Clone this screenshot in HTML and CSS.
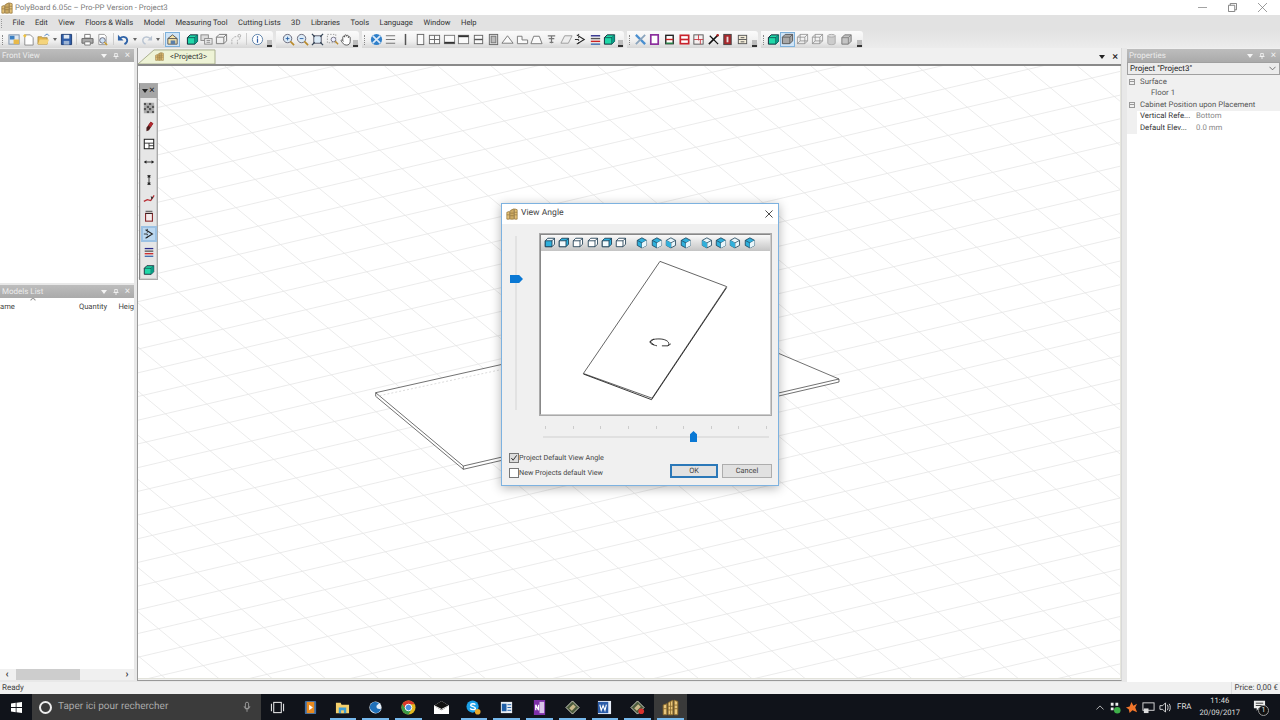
FILE: index.html
```html
<!DOCTYPE html>
<html lang="en">
<head>
<meta charset="utf-8">
<title>PolyBoard</title>
<link rel="stylesheet" href="styles.css">
</head>
<body>
<svg class="defs" width="0" height="0">
  <defs>
    <symbol id="pb" viewBox="0 0 14 14"><path d="M1 5l3-1v9H1zM5 3l4-2v12H5zM10 1l3 1v11h-3z" fill="#e9c67c" stroke="#8a6a2c" stroke-width=".8"/><path d="M5 6h4M5 9h4M1 8h3M10 5h3M10 8h3M7 2v11" stroke="#8a6a2c" stroke-width=".7"/></symbol>
    <symbol id="pin" viewBox="0 0 7 7"><path d="M2 .5h3v3.500H2zM.5 4h6M3.500 4v3" fill="none" stroke="#f4f4f4"/></symbol>
    <symbol id="cube" viewBox="0 0 14 14"><path d="M1.500 5l3-3h8v7l-3 3h-8z" fill="#1fd8a8" stroke="#123" stroke-width="1"/><path d="M1.500 5h8v7M9.500 5l3-3" fill="none" stroke="#123" stroke-width=".7"/><path d="M9.500 5l3-3v7l-3 3z" fill="#0a9c86"/></symbol>
    <symbol id="proj" viewBox="0 0 14 14"><rect x="1" y="2" width="11" height="10" fill="#dfe8f2" stroke="#7a8fa8"/><path d="M2 3h5v4H2z" fill="#3a7fc2"/><path d="M6 7h6v5H6z" fill="#e8b94a"/></symbol>
    <symbol id="new" viewBox="0 0 14 14"><path d="M3 2h6l3 3v8H3z" fill="#fff" stroke="#8a8a8a"/><path d="M1 3l2-2 2 2-2 2z" fill="#eec23f"/></symbol>
    <symbol id="open" viewBox="0 0 14 14"><path d="M1 4h4l1 1h5v7H1z" fill="#e3b54a" stroke="#9a7a2c" stroke-width=".7"/><path d="M3 7h10l-2 5H1z" fill="#f4d47c"/><path d="M8 3l3-2 2 2" fill="none" stroke="#4b82bf"/></symbol>
    <symbol id="save" viewBox="0 0 14 14"><path d="M1.500 1.500h11v11h-11z" fill="#2f5da8" stroke="#1c3a70"/><rect x="4" y="2" width="6" height="4" fill="#dfe8f2"/><rect x="4" y="8.500" width="6" height="4" fill="#9db4d4"/></symbol>
    <symbol id="print" viewBox="0 0 14 14"><path d="M4 1.500h6v4H4z" fill="#fff" stroke="#777"/><path d="M1 6h12v5H1z" fill="#a9a9a9" stroke="#666"/><path d="M4 9.500h6v3.500H4z" fill="#fff" stroke="#777"/></symbol>
    <symbol id="prev" viewBox="0 0 14 14"><path d="M3 1.500h6l2 2v9H3z" fill="#fff" stroke="#999"/><circle cx="7" cy="8" r="3" fill="#cfe2f5" stroke="#667"/><path d="M9 10l3 3" stroke="#c99b2a" stroke-width="1.500"/></symbol>
    <symbol id="undo" viewBox="0 0 14 14"><path d="M3 6c3-3 8-2 8 2 0 2-1 3-3 4" fill="none" stroke="#2f63a8" stroke-width="2"/><path d="M1 2v6h6z" fill="#2f63a8"/></symbol>
    <symbol id="redo" viewBox="0 0 14 14"><path d="M11 6C8 3 3 4 3 8c0 2 1 3 3 4" fill="none" stroke="#b9c4d2" stroke-width="1.500"/><path d="M13 3v5H8z" fill="#b9c4d2"/></symbol>
    <symbol id="boxsel" viewBox="0 0 14 14"><path d="M2 6l5-4 5 4v6H2z" fill="#f7e3a8" stroke="#555"/><path d="M2 6h10" stroke="#555"/><path d="M5 8h5v4H5z" fill="#5b7fa8"/></symbol>
    <symbol id="gcube" viewBox="0 0 14 14"><path d="M1.500 4.500l3-3h8v7l-3 3h-8z" fill="none" stroke="#777"/><path d="M1.500 4.500h8v7M9.500 4.500l3-3" fill="none" stroke="#777"/></symbol>
    <symbol id="stack" viewBox="0 0 14 14"><rect x="1" y="2" width="8" height="6" fill="#ddd" stroke="#888"/><rect x="5" y="6" width="8" height="6" fill="#eee" stroke="#888"/><path d="M7 8h4M7 10h4" stroke="#888"/></symbol>
    <symbol id="faint" viewBox="0 0 14 14"><path d="M2 12V7l3-3h3M8 12V8l4-3" fill="none" stroke="#aaa" stroke-dasharray="2 1"/><circle cx="10" cy="3" r="1.500" fill="none" stroke="#aaa"/></symbol>
    <symbol id="info" viewBox="0 0 14 14"><circle cx="7" cy="7" r="5.500" fill="#fff" stroke="#5b7fa8"/><path d="M7 6v4.500M7 3.500v1.500" stroke="#2f5da8" stroke-width="1.300"/></symbol>
    <symbol id="zin" viewBox="0 0 14 14"><circle cx="6" cy="6" r="4.500" fill="#dcebf7" stroke="#667"/><path d="M4 6h4M6 4v4" stroke="#2f63a8"/><path d="M9 9l4 4" stroke="#b98a2a" stroke-width="1.800"/></symbol>
    <symbol id="zout" viewBox="0 0 14 14"><circle cx="6" cy="6" r="4.500" fill="#dcebf7" stroke="#667"/><path d="M4 6h4" stroke="#2f63a8"/><path d="M9 9l4 4" stroke="#b98a2a" stroke-width="1.800"/></symbol>
    <symbol id="zext" viewBox="0 0 14 14"><rect x="3" y="3" width="8" height="8" fill="#dcebf7" stroke="#556"/><path d="M1 1l3 3M13 1l-3 3M1 13l3-3M13 13l-3-3" stroke="#345" stroke-width="1.300"/></symbol>
    <symbol id="zwin" viewBox="0 0 14 14"><rect x="1.500" y="1.500" width="9" height="9" fill="none" stroke="#999" stroke-dasharray="1.500 1.500"/><circle cx="8" cy="7" r="2.500" fill="#eef" stroke="#778"/><path d="M10 9l3 3" stroke="#b98a2a" stroke-width="1.500"/></symbol>
    <symbol id="hand" viewBox="0 0 14 14"><path d="M3 8V4.500a1 1 0 012 0V3a1 1 0 012 0v.500a1 1 0 012 0V5a1 1 0 012 0v4c0 3-2 4-4 4-3 0-4-2-6-5 1-1 2 0 3 1" fill="#fff" stroke="#444" stroke-width=".9"/></symbol>
    <symbol id="globe" viewBox="0 0 14 14"><circle cx="7" cy="7" r="6" fill="#2f7fc9"/><path d="M3 3l8 8M11 3l-8 8" stroke="#dbeafa" stroke-width="1.800"/></symbol>
    <symbol id="lines" viewBox="0 0 14 14"><path d="M2 3h10M2 7h10M2 11h10" stroke="#777" stroke-width="1.200"/></symbol>
    <symbol id="ibar" viewBox="0 0 14 14"><path d="M7 1v12" stroke="#555" stroke-width="1.600"/></symbol>
    <symbol id="rect" viewBox="0 0 14 14"><rect x="3.500" y="1.500" width="7" height="11" fill="#fafafa" stroke="#666"/></symbol>
    <symbol id="cross" viewBox="0 0 14 14"><rect x="1.500" y="2.500" width="11" height="9" fill="#fafafa" stroke="#666"/><path d="M1.500 7h11M7 2.500v9" stroke="#666"/></symbol>
    <symbol id="lower" viewBox="0 0 14 14"><rect x="1.500" y="2.500" width="11" height="9" fill="#fafafa" stroke="#777"/><path d="M1.500 10.500h11" stroke="#333" stroke-width="2"/></symbol>
    <symbol id="upper" viewBox="0 0 14 14"><rect x="1.500" y="2.500" width="11" height="9" fill="#fafafa" stroke="#777"/><path d="M1.500 3.500h11" stroke="#333" stroke-width="2"/></symbol>
    <symbol id="mid" viewBox="0 0 14 14"><rect x="2.500" y="2.500" width="9" height="9" fill="#fafafa" stroke="#666"/><path d="M2.500 7h9" stroke="#555" stroke-width="1.500"/></symbol>
    <symbol id="panel" viewBox="0 0 14 14"><rect x="2.500" y="1.500" width="9" height="11" fill="#e0e0e0" stroke="#666"/><rect x="4.500" y="3.500" width="5" height="7" fill="#bbb" stroke="#777"/></symbol>
    <symbol id="house" viewBox="0 0 14 14"><path d="M1 11L7 3l6 8z" fill="#fafafa" stroke="#777"/></symbol>
    <symbol id="step" viewBox="0 0 14 14"><path d="M1.500 3.500h5v4h6v4h-11z" fill="#fafafa" stroke="#777"/></symbol>
    <symbol id="trap" viewBox="0 0 14 14"><path d="M1 11.500l3-8h6l3 8z" fill="#fafafa" stroke="#777"/></symbol>
    <symbol id="tee" viewBox="0 0 14 14"><path d="M3 3h8M7 3v8M4 6h6M5 10h4" stroke="#777" stroke-width="1.300"/></symbol>
    <symbol id="para" viewBox="0 0 14 14"><path d="M1 11l4-8h8l-4 8z" fill="#eee" stroke="#999"/></symbol>
    <symbol id="axis" viewBox="0 0 14 14"><path d="M3 2l8 5-8 5" fill="none" stroke="#222" stroke-width="1.200"/><path d="M5 1v12" stroke="#222" stroke-dasharray="1.500 1.500"/><path d="M1 7h4" stroke="#222"/></symbol>
    <symbol id="rgb" viewBox="0 0 14 14"><path d="M2 3h10" stroke="#2a2a8a" stroke-width="1.500"/><path d="M2 6h10" stroke="#555" stroke-width="1.500"/><path d="M2 9h10" stroke="#c22" stroke-width="1.500"/><path d="M2 12h10" stroke="#3a6ab0" stroke-width="1.500"/></symbol>
    <symbol id="tools" viewBox="0 0 14 14"><path d="M2 2l10 10" stroke="#4a8fd0" stroke-width="2.400"/><path d="M12 2L2 12" stroke="#8aa4bd" stroke-width="2"/></symbol>
    <symbol id="pframe" viewBox="0 0 14 14"><rect x="3" y="2" width="8" height="10" fill="#fff" stroke="#8a2c9c" stroke-width="1.800"/></symbol>
    <symbol id="gmid" viewBox="0 0 14 14"><rect x="3" y="2.500" width="8" height="9" fill="#fff" stroke="#222" stroke-width="1.500"/><path d="M3 7h8" stroke="#c22" stroke-width="1.500"/><path d="M3 11h8" stroke="#2a8a4a" stroke-width="1.500"/></symbol>
    <symbol id="rmid" viewBox="0 0 14 14"><rect x="2.500" y="2.500" width="9" height="9" fill="#fff" stroke="#c8222c" stroke-width="1.800"/><path d="M2.500 7h9" stroke="#c8222c" stroke-width="1.800"/></symbol>
    <symbol id="rgrid" viewBox="0 0 14 14"><rect x="2" y="2" width="10" height="10" fill="#f6f0f0" stroke="#555"/><path d="M7 2v6M2 7h10M9 7v5" stroke="#c8424c"/></symbol>
    <symbol id="xcross" viewBox="0 0 14 14"><path d="M2 12L12 2" stroke="#111" stroke-width="1.600"/><path d="M3 3l9 9" stroke="#111" stroke-width="1.300"/><circle cx="11.500" cy="2.500" r="1.400" fill="#a22"/></symbol>
    <symbol id="door" viewBox="0 0 14 14"><rect x="3" y="1.500" width="8" height="11" fill="#a8282c" stroke="#444"/><rect x="6" y="4" width="2" height="6" fill="#e9dcdc"/></symbol>
    <symbol id="drawer" viewBox="0 0 14 14"><rect x="2.500" y="2.500" width="9" height="9" fill="#f3ecd8" stroke="#555"/><path d="M2.500 7h9M5 5h4M5 9.500h4" stroke="#555"/></symbol>
    <symbol id="grey3" viewBox="0 0 14 14"><path d="M1.500 4.500l3-3h8v7l-3 3h-8z" fill="#a8a8a8" stroke="#555"/><path d="M1.500 4.500h8v7M9.500 4.500l3-3" fill="none" stroke="#555" stroke-width=".8"/></symbol>
    <symbol id="wire" viewBox="0 0 14 14"><path d="M1.500 4.500l3-3h8v7l-3 3h-8zM1.500 4.500h8v7M9.500 4.500l3-3M4.500 1.500v7h8M1.500 11.500l3-3" fill="none" stroke="#888" stroke-width=".8"/></symbol>
    <symbol id="cyl" viewBox="0 0 14 14"><path d="M3 3v8c0 2 8 2 8 0V3" fill="#ccc" stroke="#aaa"/><ellipse cx="7" cy="3" rx="4" ry="1.500" fill="#ddd" stroke="#aaa"/></symbol>
    <symbol id="solid" viewBox="0 0 14 14"><path d="M2 5l3-3h7v7l-3 3H2z" fill="#c4c4c4" stroke="#777"/><path d="M2 5h7v7M9 5l3-3" fill="none" stroke="#777" stroke-width=".8"/></symbol>
    <symbol id="chk" viewBox="0 0 14 14"><g fill="#555"><rect x="1" y="1" width="3" height="3"/><rect x="7" y="1" width="3" height="3"/><rect x="4" y="4" width="3" height="3"/><rect x="10" y="4" width="3" height="3"/><rect x="1" y="7" width="3" height="3"/><rect x="7" y="7" width="3" height="3"/><rect x="4" y="10" width="3" height="3"/><rect x="10" y="10" width="3" height="3"/></g><path d="M4 1h3v3H4zM10 1h3v3h-3zM1 4h3v3H1zM7 4h3v3H7zM4 7h3v3H4zM10 7h3v3h-3zM1 10h3v3H1zM7 10h3v3H7z" fill="#a8a8a8"/></symbol>
    <symbol id="pen" viewBox="0 0 14 14"><path d="M9 2l3 2-5 8-3 1 0-4z" fill="#4a1c1c"/><path d="M9 2l3 2-3 4.500-3-2z" fill="#b22a30"/></symbol>
    <symbol id="win" viewBox="0 0 14 14"><rect x="1.500" y="1.500" width="11" height="11" fill="#fff" stroke="#222" stroke-width="1.200"/><path d="M1.500 6h11M7 6v6.500M7 9h5.500" stroke="#222"/></symbol>
    <symbol id="harrow" viewBox="0 0 14 14"><path d="M2 7h10" stroke="#222"/><path d="M1 7l3-2v4zM13 7l-3-2v4z" fill="#222"/></symbol>
    <symbol id="varrow" viewBox="0 0 14 14"><path d="M7 2v10" stroke="#222"/><path d="M5 2h4M5 12h4" stroke="#222"/><path d="M7 1l-2 3h4zM7 13l-2-3h4z" fill="#222"/></symbol>
    <symbol id="redm" viewBox="0 0 14 14"><path d="M1 11l4-2 4 1 4-6" fill="none" stroke="#b82a30" stroke-width="1.500"/><path d="M9 5l3 1-2 3z" fill="#333"/></symbol>
    <symbol id="rbox" viewBox="0 0 14 14"><rect x="3" y="4" width="8" height="9" fill="#f6ecec" stroke="#8a2a2c" stroke-width="1.300"/><path d="M3 1.500h8" stroke="#333"/><path d="M3 4h8" stroke="#222"/></symbol>
    <symbol id="bcube" viewBox="0 0 14 14"><path d="M1.500 4.500l3-3h8v7l-3 3h-8z" fill="#eaf6fb" stroke="#1c3a50"/><path d="M1.500 4.500h8v7h-8z" fill="#2fb0dc" stroke="#1c3a50"/><path d="M9.500 4.500l3-3" stroke="#1c3a50"/></symbol>
    <symbol id="bcube2" viewBox="0 0 14 14"><path d="M1.500 4.500l3-3h8v7l-3 3h-8z" fill="#2fb0dc" stroke="#1c3a50"/><path d="M1.500 4.500h8v7h-8z" fill="#f2fafd" stroke="#1c3a50"/><path d="M9.500 4.500l3-3" stroke="#1c3a50"/></symbol>
    <symbol id="bcube3" viewBox="0 0 14 14"><path d="M1.500 4.500l3-3h8v7l-3 3h-8z" fill="#fff" stroke="#1c3a50"/><path d="M1.500 4.500h8v7" fill="none" stroke="#1c3a50"/><path d="M9.500 4.500l3-3" stroke="#1c3a50"/></symbol>
    <symbol id="ball" viewBox="0 0 14 14"><path d="M7 1l5.500 3v6L7 13l-5.500-3V4z" fill="#2fb0dc" stroke="#24465c"/><path d="M1.500 4L7 7l5.500-3M7 7v6" fill="none" stroke="#24465c" stroke-width=".9"/><path d="M7 7l5.500-3v6L7 13z" fill="#e8f6fb"/></symbol>
    <symbol id="ball2" viewBox="0 0 14 14"><path d="M7 1l5.500 3v6L7 13l-5.500-3V4z" fill="#e8f6fb" stroke="#24465c"/><path d="M1.500 4L7 7l5.500-3M7 7v6" fill="none" stroke="#24465c" stroke-width=".9"/><path d="M1.500 4L7 7v6l-5.500-3z" fill="#2fb0dc"/></symbol>
  </defs>
</svg>

<header class="titlebar">
  <svg class="title-icon"><use href="#pb"/></svg>
  <span class="title-text">PolyBoard 6.05c – Pro-PP Version - Project3</span>
  <div class="win-ctrls">
    <svg class="wc" viewBox="0 0 10 10"><path d="M0 5h10" stroke="#999"/></svg>
    <svg class="wc" viewBox="0 0 10 10"><path d="M.5 2.500h7v7h-7zM2.500 2.500v-2h7v7h-2" fill="none" stroke="#777"/></svg>
    <svg class="wc" viewBox="0 0 10 10"><path d="M0 0l10 10M10 0L0 10" stroke="#777" stroke-width=".8"/></svg>
  </div>
</header>

<nav class="menubar">
  <span class="menu-grip"></span>
  <span>File</span><span>Edit</span><span>View</span><span>Floors &amp; Walls</span><span>Model</span><span>Measuring Tool</span><span>Cutting Lists</span><span>3D</span><span>Libraries</span><span>Tools</span><span>Language</span><span>Window</span><span>Help</span>
</nav>

<div class="toolbars">
  <div class="tb tb1">
    <svg class="ic"><use href="#proj"/></svg><svg class="ic"><use href="#new"/></svg><svg class="ic"><use href="#open"/></svg><i class="drop"></i><svg class="ic"><use href="#save"/></svg><b class="sep"></b>
    <svg class="ic"><use href="#print"/></svg><svg class="ic"><use href="#prev"/></svg><b class="sep"></b>
    <svg class="ic"><use href="#undo"/></svg><i class="drop"></i><svg class="ic"><use href="#redo"/></svg><i class="drop"></i><b class="sep tight"></b>
    <svg class="ic on sel1"><use href="#boxsel"/></svg>
    <svg class="ic"><use href="#cube"/></svg><svg class="ic"><use href="#stack"/></svg><svg class="ic"><use href="#gcube"/></svg><svg class="ic"><use href="#faint"/></svg><b class="sep"></b><svg class="ic"><use href="#info"/></svg><u class="over"></u>
  </div>
  <div class="tb tb2">
    <svg class="ic"><use href="#zin"/></svg><svg class="ic"><use href="#zout"/></svg><svg class="ic"><use href="#zext"/></svg><svg class="ic"><use href="#zwin"/></svg><svg class="ic"><use href="#hand"/></svg><u class="over"></u>
  </div>
  <div class="tb tb3">
    <svg class="ic"><use href="#globe"/></svg><svg class="ic"><use href="#lines"/></svg><svg class="ic"><use href="#ibar"/></svg><svg class="ic"><use href="#rect"/></svg><svg class="ic"><use href="#cross"/></svg><svg class="ic"><use href="#lower"/></svg><svg class="ic"><use href="#upper"/></svg><svg class="ic"><use href="#mid"/></svg><svg class="ic"><use href="#panel"/></svg><svg class="ic"><use href="#house"/></svg><svg class="ic"><use href="#step"/></svg><svg class="ic"><use href="#trap"/></svg><svg class="ic"><use href="#tee"/></svg><svg class="ic"><use href="#para"/></svg><svg class="ic"><use href="#axis"/></svg><svg class="ic"><use href="#rgb"/></svg><svg class="ic"><use href="#cube"/></svg><u class="over"></u>
  </div>
  <div class="tb tb4">
    <svg class="ic"><use href="#tools"/></svg><svg class="ic"><use href="#pframe"/></svg><svg class="ic"><use href="#gmid"/></svg><svg class="ic"><use href="#rmid"/></svg><svg class="ic"><use href="#rgrid"/></svg><svg class="ic"><use href="#xcross"/></svg><svg class="ic"><use href="#door"/></svg><svg class="ic"><use href="#drawer"/></svg><u class="over"></u>
  </div>
  <div class="tb tb5">
    <svg class="ic"><use href="#cube"/></svg><svg class="ic on"><use href="#grey3"/></svg><svg class="ic"><use href="#wire"/></svg><svg class="ic"><use href="#wire"/></svg><svg class="ic"><use href="#cyl"/></svg><svg class="ic"><use href="#solid"/></svg><u class="over"></u>
  </div>
</div>

<main class="workspace">
  <aside class="left-dock">
    <section class="dock-pane front-pane">
      <div class="dock-head"><span>Front View</span><span class="head-btns"><em class="arrow"></em><svg class="pin"><use href="#pin"/></svg><em>×</em></span></div>
      <div class="dock-body"></div>
    </section>
    <section class="dock-pane models-pane">
      <div class="dock-head"><span>Models List</span><span class="head-btns"><em class="arrow"></em><svg class="pin"><use href="#pin"/></svg><em>×</em></span></div>
      <div class="dock-body models-body">
        <div class="cols"><span class="col-name">ame</span><span class="col-qty">Quantity</span><span class="col-h">Heig</span><i class="sort"></i></div>
        <div class="hscroll"><span class="sarrow">‹</span><span class="sthumb"></span><span class="sarrow end">›</span></div>
      </div>
    </section>
  </aside>

  <section class="center">
    <div class="tabstrip">
      <div class="tab">
        <svg class="tab-shape" viewBox="0 0 78 16" preserveAspectRatio="none"><path d="M0 16L16 1h61v15z" fill="#eef3d6" stroke="#a8ad8c"/></svg>
        <svg class="tab-icon"><use href="#pb"/></svg>
        <span>&lt;Project3&gt;</span>
      </div>
      <div class="tab-ctrls"><em class="arrow dark"></em><em>×</em></div>
    </div>
    <div class="canvas">
      <svg class="scene">
        <path class="grid-line" d="M0 22.400l983-230.500m-983 254.200l983-230.500m-983 254.200l983-230.500m-983 254.200l983-230.500m-983 254.200l983-230.500m-983 254.200l983-230.500m-983 254.200l983-230.500m-983 254.200l983-230.500m-983 254.200l983-230.500m-983 254.200l983-230.500m-983 254.200l983-230.500m-983 254.200l983-230.500m-983 254.200l983-230.500m-983 254.200l983-230.500m-983 254.200l983-230.500m-983 254.200l983-230.500m-983 254.200l983-230.500m-983 254.200l983-230.500m-983 254.200l983-230.500m-983 254.200l983-230.500m-983 254.200l983-230.500m-983 254.200l983-230.500m-983 254.200l983-230.500m-983 254.200l983-230.500m-983 254.200l983-230.500m-983 254.200l983-230.500m-983 254.200l983-230.500m-983 254.200l983-230.500m-983 254.200l983-230.500m-983 254.200l983-230.500m-983 254.200l983-230.500m-983 254.200l983-230.500m-983 254.200l983-230.500m-983 254.200l983-230.500m-983 254.200l983-230.500"/>
        <path class="grid-line" d="M-712.900 0l741 613m-687.700-613l741 613m-687.700-613l741 613m-687.700-613l741 613m-687.700-613l741 613m-687.700-613l741 613m-687.700-613l741 613m-687.700-613l741 613m-687.700-613l741 613m-687.700-613l741 613m-687.700-613l741 613m-687.700-613l741 613m-687.700-613l741 613m-687.700-613l741 613m-687.700-613l741 613m-687.700-613l741 613m-687.700-613l741 613m-687.700-613l741 613m-687.700-613l741 613m-687.700-613l741 613m-687.700-613l741 613m-687.700-613l741 613m-687.700-613l741 613m-687.700-613l741 613m-687.700-613l741 613m-687.700-613l741 613m-687.700-613l741 613m-687.700-613l741 613m-687.700-613l741 613m-687.700-613l741 613m-687.700-613l741 613m-687.700-613l741 613"/>
        <g transform="translate(-138 -66)" fill="#fff" stroke="#333" stroke-width=".7">
          <path d="M375.700 392.700L700 320 839 379v3L463.300 469.300l-87.600-73z"/>
          <path d="M375.700 392.700L463.300 466 839 379" fill="none"/>
          <path d="M463.300 466v3.300" fill="none"/>
          <path d="M375.700 396.500L700 327" fill="none" stroke="#ccc" stroke-dasharray="2 2"/>
        </g>
      </svg>
      <div class="vtools">
        <div class="vt-head"><em class="arrow dark"></em><em>×</em></div>
        <svg class="vi"><use href="#chk"/></svg>
        <svg class="vi"><use href="#pen"/></svg>
        <svg class="vi"><use href="#win"/></svg>
        <svg class="vi"><use href="#harrow"/></svg>
        <svg class="vi"><use href="#varrow"/></svg>
        <svg class="vi"><use href="#redm"/></svg>
        <svg class="vi"><use href="#rbox"/></svg>
        <svg class="vi vi-on"><use href="#axis"/></svg>
        <svg class="vi"><use href="#rgb"/></svg>
        <svg class="vi"><use href="#cube"/></svg>
      </div>
    </div>
  </section>

  <aside class="right-dock">
    <div class="dock-head"><span>Properties</span><span class="head-btns"><em class="arrow"></em><svg class="pin"><use href="#pin"/></svg><em>×</em></span></div>
    <div class="combo"><span>Project "Project3"</span><svg class="chev" viewBox="0 0 8 5"><path d="M.5.500L4 4 7.500.500" fill="none" stroke="#666"/></svg></div>
    <div class="prop-row grp first"><i class="minus"></i><span>Surface</span></div>
    <div class="prop-row sub"><span>Floor 1</span></div>
    <div class="prop-row grp"><i class="minus"></i><span>Cabinet Position upon Placement</span></div>
    <div class="prop-row val"><span class="k">Vertical Refe...</span><span class="v">Bottom</span></div>
    <div class="prop-row val"><span class="k">Default Elev...</span><span class="v">0.0 mm</span></div>
    <div class="prop-rest"></div>
  </aside>
</main>

<footer class="statusbar"><span>Ready</span><span class="price">Price: 0,00 €</span></footer>

<div class="taskbar">
  <svg class="start" viewBox="0 0 14 14"><path d="M0 2l6-1v5.500H0zM7 .800l7-.8v6.500H7zM0 7.500h6V13l-6-1zM7 7.500h7V14l-7-1z" fill="#fff"/></svg>
  <div class="search"><i class="cortana"></i><span>Taper ici pour rechercher</span><svg class="mic" viewBox="0 0 10 14"><rect x="3" y="1" width="4" height="8" rx="2" fill="none" stroke="#aaa"/><path d="M1.500 6c0 5 7 5 7 0M5 10.500V13" fill="none" stroke="#aaa"/></svg></div>
  <div class="tasks">
    <div class="task"><svg viewBox="0 0 16 16"><rect x="4" y="2.500" width="8" height="11" fill="none" stroke="#fff"/><path d="M1.500 4v8M14.500 4v8" stroke="#fff"/></svg></div>
    <div class="task"><svg viewBox="0 0 16 16"><rect x="2" y="1" width="12" height="14" rx="1" fill="#3c6ea8"/><rect x="4" y="2" width="8" height="12" fill="#e88a1f"/><path d="M6.500 5l4 3-4 3z" fill="#fff"/></svg></div>
    <div class="task run"><svg viewBox="0 0 16 16"><path d="M1 3h5l1 2h8v9H1z" fill="#f4cf6a"/><path d="M4 8h8v6H4z" fill="#3f9fd6"/><path d="M6.500 11h3v3h-3z" fill="#f4cf6a"/></svg></div>
    <div class="task run"><svg viewBox="0 0 16 16"><circle cx="8" cy="8" r="6.500" fill="#e4eef8"/><path d="M2 8c0-5 5-7 9-5 2 1-2 2-2 4 0 3 4 3 5 2-1 4-5 6-8 4S2 10 2 8z" fill="#1f6fb8"/></svg></div>
    <div class="task run"><svg viewBox="0 0 16 16"><circle cx="8" cy="8" r="7.500" fill="#e2b71f"/><path d="M8 .500A7.500 7.500 0 001.500 4.300L5 10l3-5.500h6.500A7.500 7.500 0 008 .500z" fill="#d8382c"/><path d="M1.500 4.300A7.500 7.500 0 008 15.500l3-5.500H5z" fill="#3a9a48"/><circle cx="8" cy="8" r="3.500" fill="#4a8fe0" stroke="#fff"/></svg></div>
    <div class="task"><svg viewBox="0 0 16 16"><path d="M0 6l8-5 8 5v9H0z" fill="#fff"/><path d="M0 6l8 5 8-5-8-5z" fill="#111"/><path d="M0 6l8 4 8-4" fill="none" stroke="#fff"/></svg></div>
    <div class="task run"><svg viewBox="0 0 16 16"><circle cx="7" cy="7" r="6.500" fill="#1ca0e6"/><path d="M10 5c-1-1.500-5-1.500-5 .500s5 1 5 3.200-4.500 2-5.500.3" fill="none" stroke="#fff" stroke-width="1.500"/><circle cx="12.500" cy="12.500" r="3" fill="#e8a92a"/></svg></div>
    <div class="task run"><svg viewBox="0 0 16 16"><rect x="2" y="2" width="12" height="12" fill="#e8eef5"/><rect x="3" y="4" width="5" height="8" fill="#1f5fa8"/><path d="M9 5h4M9 8h4M9 11h4" stroke="#1f5fa8"/></svg></div>
    <div class="task run"><svg viewBox="0 0 16 16"><rect x="2" y="0" width="12" height="16" fill="#7e2fa8"/><rect x="8" y="2" width="5" height="12" fill="#d9c4e8"/><path d="M4 11V5l3 6V5" fill="none" stroke="#fff" stroke-width="1.300"/></svg></div>
    <div class="task run"><svg viewBox="0 0 16 16"><path d="M8 1l7 7-7 7-7-7z" fill="#4a5a3c" stroke="#d8d8c8"/><rect x="6" y="5" width="4" height="6" fill="#c9b98a" transform="rotate(45 8 8)"/></svg></div>
    <div class="task run"><svg viewBox="0 0 16 16"><rect x="1" y="1" width="14" height="14" fill="#e6edf8"/><rect x="1" y="2" width="11" height="12" fill="#2b5ca8"/><path d="M3 5l1.500 6L6.500 6l2 5L10 5" fill="none" stroke="#fff" stroke-width="1.200"/></svg></div>
    <div class="task run"><svg viewBox="0 0 16 16"><path d="M8 1l7 7-7 7-7-7z" fill="#4a5a3c" stroke="#d8d8c8"/><rect x="6" y="5" width="4" height="6" fill="#c9b98a" transform="rotate(45 8 8)"/><circle cx="12" cy="12" r="3" fill="#d8322c"/></svg></div>
    <div class="task run active"><svg viewBox="0 0 14 14"><use href="#pb"/></svg></div>
  </div>
  <div class="tray">
    <svg class="t1" viewBox="0 0 10 6"><path d="M.5 5.500L5 1l4.500 4.500" fill="none" stroke="#ddd"/></svg>
    <svg class="t2" viewBox="0 0 14 14"><path d="M3 2h3v3H3zM8 2h3v3H8zM3 7h3v3H3z" fill="#eee"/><circle cx="10" cy="10" r="3.500" fill="#3fb04a"/></svg>
    <svg class="t2" viewBox="0 0 14 14"><path d="M7 1l2 4 4-2-2 4 2 5-5-2-3 3-1-4-3-2 4-1z" fill="#f0752a"/></svg>
    <svg class="t2" viewBox="0 0 14 14"><rect x="1" y="2" width="12" height="8" fill="none" stroke="#ddd"/><rect x="2" y="8" width="5" height="5" fill="#ddd"/></svg>
    <svg class="t2" viewBox="0 0 14 14"><path d="M1 5h3l3-3v10L4 9H1z" fill="none" stroke="#ddd"/><path d="M9 4c1 2 1 4 0 6M11 3c1.500 2 1.500 6 0 8" fill="none" stroke="#ddd"/></svg>
    <span class="lang">FRA</span>
    <div class="clock"><span>11:46</span><span>20/09/2017</span></div>
    <div class="notif"><svg viewBox="0 0 14 14"><path d="M1 2h12v8H6l-2 3v-3H1z" fill="#eee"/><path d="M3 4.500h8M3 7h8" stroke="#333"/></svg><b>1</b></div>
  </div>
</div>

<div class="dialog">
  <div class="dlg-title"><svg class="dlg-icon"><use href="#pb"/></svg><span>View Angle</span><svg class="dlg-x" viewBox="0 0 9 9"><path d="M.5.500l8 8M8.500.500l-8 8" stroke="#333"/></svg></div>
  <div class="dlg-top">
    <div class="vslider"><i class="vtrack"></i><i class="vthumb"></i></div>
    <div class="preview">
      <div class="pv-tools">
        <svg class="pi"><use href="#bcube"/></svg><svg class="pi"><use href="#bcube2"/></svg><svg class="pi"><use href="#bcube3"/></svg><svg class="pi"><use href="#bcube3"/></svg><svg class="pi"><use href="#bcube2"/></svg><svg class="pi"><use href="#bcube3"/></svg><b class="pv-gap"></b>
        <svg class="pi"><use href="#ball"/></svg><svg class="pi"><use href="#ball"/></svg><svg class="pi"><use href="#ball2"/></svg><svg class="pi"><use href="#ball"/></svg><b class="pv-gap"></b>
        <svg class="pi"><use href="#ball2"/></svg><svg class="pi"><use href="#ball"/></svg><svg class="pi"><use href="#ball2"/></svg><svg class="pi"><use href="#ball"/></svg>
      </div>
      <svg class="pv-scene" viewBox="0 0 229 165">
        <g transform="translate(-541 -251)" fill="none" stroke="#222">
          <path d="M660 261.500L727.500 287 652 400 582.500 375z" fill="#fff" stroke-width=".7"/>
          <path d="M582.500 375.500L651.500 401.500 727.500 288" stroke-width=".9"/>
          <path d="M668 347c3-3-1-7-9-7-5 0-9 1-9 3s3 3 7 4M650 343l4-3M650 343l4 3M662 347h6l3-2" stroke-width=".9"/>
        </g>
      </svg>
    </div>
  </div>
  <div class="hslider"><div class="ticks"><i></i><i></i><i></i><i></i><i></i><i></i><i></i><i></i><i></i></div><i class="htrack"></i><i class="hthumb"></i></div>
  <div class="dlg-bottom">
    <div class="checks">
      <label class="chk"><i class="box checked"><svg viewBox="0 0 9 9"><path d="M1.500 4.500l2 2.500 4-5.500" fill="none" stroke="#222"/></svg></i>Project Default View Angle</label>
      <label class="chk"><i class="box"></i>New Projects default View</label>
    </div>
    <div class="btns"><span class="btn def">OK</span><span class="btn">Cancel</span></div>
  </div>
  <i class="grip"></i>
</div>
</body>
</html>
```

FILE: styles.css
```css
* { box-sizing: border-box; }
html, body { margin: 0; padding: 0; }
body {
  width: 1280px; height: 720px; overflow: hidden; position: relative;
  display: flex; flex-direction: column;
  background: #f0f0f0; color: #3a3a3a;
  font-family: Roboto, "Noto Sans", sans-serif; font-size: 8px; line-height: 1;
  text-rendering: geometricPrecision;
}
em, i { font-style: normal; }
u { text-decoration: none; }
.defs { position: absolute; }

/* title bar */
.titlebar { height: 15px; background: #fff; display: flex; align-items: center; padding-left: 1px; flex: none; }
.title-icon { width: 12px; height: 12px; margin-right: 2px; }
.title-text { color: #7a7a7a; font-size: 7.800px; }
.win-ctrls { margin-left: auto; display: flex; gap: 21px; padding-right: 13px; }
.wc { width: 9px; height: 9px; }

/* menu */
.menubar { height: 15px; background: #e2e2e2; display: flex; align-items: center; gap: 10.500px; padding: 1px 0 0; flex: none; color: #333; font-size: 7.600px; }
.menu-grip { width: 1px; height: 9px; border-left: 1px dotted #999; margin-left: 1px; }

/* toolbars */
.toolbars { height: 18px; flex: none; display: flex; align-items: center; gap: 3px; background: linear-gradient(#e2e2e2, #ececec); }
.tb { height: 17px; display: flex; align-items: center; border-radius: 0 3px 3px 0; background: linear-gradient(#fbfbfb, #efefef 60%, #d6d6d6); padding-left: 7px; position: relative; flex: none; }
.tb::before { content: ""; position: absolute; left: 2px; top: 4px; height: 10px; border-left: 1px dotted #888; }
.tb1 { width: 273px; }
.tb2 { width: 83px; padding-left: 5px; }
.tb2::before { display: none; }
.tb3 { width: 262px; padding-left: 7px; }
.tb4 { width: 131px; padding-left: 6px; }
.tb5 { width: 102px; padding-left: 5px; }
.ic { width: 13px; height: 13px; margin: 0 .8px; flex: none; }
.ic.on { background: #cfe4f7; outline: 1px solid #7fb2dc; }
.ic.sel1 { margin-right: 6px; }
.drop { width: 0; height: 0; margin: 0 2px; border: 2px solid transparent; border-top: 3px solid #666; border-bottom: 0; flex: none; }
.sep { width: 1px; height: 12px; background: #ccc; margin: 0 3px; flex: none; }
.sep.tight { margin: 0 1.500px 0 1px; }
.over { position: absolute; right: 1px; bottom: 1px; width: 5px; height: 7px; background: #bcbcbc; border-bottom: 2px solid #333; }

/* workspace */
.workspace { flex: 1; min-height: 0; display: flex; background: #e8e8e8; }
.left-dock { width: 134px; flex: none; display: flex; flex-direction: column; gap: 2px; }
.dock-pane { display: flex; flex-direction: column; }
.front-pane { height: 235px; padding-top: 1px; }
.models-pane { flex: 1; }
.dock-head { height: 13px; flex: none; display: flex; justify-content: space-between; align-items: center; padding: 0 4px 0 2px; background: linear-gradient(#bdbdbd, #aaa); color: #ececec; }
.head-btns { display: flex; align-items: center; gap: 6px; font-size: 10px; color: #f0f0f0; }
.pin { width: 6px; height: 6px; }
.arrow { width: 0; height: 0; border: 3.500px solid transparent; border-top: 4px solid #f4f4f4; border-bottom: 0; }
.arrow.dark { border-top-color: #222; }
.dock-body { flex: 1; background: #fff; position: relative; }
.models-body { display: flex; flex-direction: column; justify-content: space-between; margin-bottom: 2px; }
.cols { height: 17px; display: flex; align-items: center; position: relative; overflow: hidden; color: #444; font-size: 7.600px; }
.col-name { width: 80px; }
.col-qty { width: 40px; }
.sort { position: absolute; left: 31px; top: 0; width: 4px; height: 4px; border-left: 1px solid #999; border-top: 1px solid #999; transform: rotate(45deg); }
.hscroll { height: 11px; background: #f0f0f0; display: flex; align-items: center; justify-content: space-between; position: relative; }
.sarrow { width: 14px; text-align: center; font-size: 10px; color: #333; font-weight: 700; line-height: 9px; }
.sthumb { position: absolute; left: 16px; width: 64px; top: 0; height: 11px; background: #cdcdcd; }

.center { flex: 1; min-width: 0; margin: 0 5px 1px 3px; display: flex; flex-direction: column; border-left: 1px solid #999; border-right: 1px solid #d8d8d8; border-bottom: 1px solid #999; background: #f0f0f0; padding-bottom: 1px; }
.tabstrip { height: 18px; flex: none; display: flex; justify-content: space-between; align-items: flex-end; background: #f0f0f0; border-bottom: 2px solid #8a8a8a; }
.tab { width: 78px; height: 15px; position: relative; display: flex; align-items: center; padding-left: 17px; gap: 6px; color: #333; }
.tab-shape { position: absolute; left: 0; top: 0; width: 78px; height: 15px; }
.tab-icon { width: 9px; height: 9px; position: relative; }
.tab span { position: relative; font-size: 7.800px; }
.tab-ctrls { display: flex; align-items: center; gap: 7px; padding: 0 3px 2px 0; font-size: 11px; color: #222; }
.canvas { flex: 1; min-height: 0; position: relative; background: #fff; overflow: hidden; border-right: 1px solid #e6e6de; border-bottom: 1px solid #e2e2da; }
.scene { position: absolute; left: 0; top: 0; width: 100%; height: 100%; }
.grid-line { fill: none; stroke: #e6e6e6; stroke-width: .8; }
.vtools { position: absolute; left: 1px; top: 17px; width: 19px; height: 197px; background: #e6e6e6; border: 1px solid #aaa; border-left-color: #888; display: flex; flex-direction: column; align-items: center; gap: 6px; box-shadow: inset 0 0 0 1px #cfcfcf; }
.vt-head { width: 100%; height: 14px; background: #a6a6a6; display: flex; align-items: center; justify-content: center; gap: 1px; color: #222; font-size: 10px; margin-bottom: -2px; }
.vi { width: 12px; height: 12px; flex: none; }
.vi-on { background: #bcd8f0; outline: 2px solid #9cc2e4; }

/* right dock */
.right-dock { width: 153px; flex: none; display: flex; flex-direction: column; background: #f0f0f0; padding-top: 1px; }
.combo { height: 13px; flex: none; border: 1px solid #a0a0a0; background: #ececec; display: flex; align-items: center; justify-content: space-between; padding: 0 3px 0 2px; color: #222; }
.chev { width: 7px; height: 5px; }
.prop-row { height: 11.500px; flex: none; display: flex; align-items: center; color: #555; font-size: 7.800px; }
.prop-row.first { margin-top: 1px; }
.minus { width: 6px; height: 6px; border: 1px solid #999; margin: 0 5px 0 2px; background: linear-gradient(#999, #999) center / 4px 1px no-repeat; flex: none; }
.sub { padding-left: 24px; }
.val { margin-left: 10px; background: #fff; }
.k { width: 56px; padding-left: 3px; color: #333; white-space: nowrap; }
.v { color: #888; padding-left: 3px; }
.prop-rest { flex: 1; background: #fff; }

/* status */
.statusbar { height: 12px; flex: none; display: flex; justify-content: space-between; align-items: center; padding: 0 2px; background: #f0f0f0; color: #444; }
.price { border-left: 1px solid #ddd; padding-left: 2px; height: 12px; line-height: 12px; }

/* taskbar */
.taskbar { height: 26px; flex: none; background: #10131a; display: flex; align-items: center; color: #ddd; }
.start { width: 11px; height: 11px; margin: 0 10.500px; flex: none; }
.search { width: 229px; height: 26px; background: #3b3b3b; display: flex; align-items: center; padding-left: 7px; font-size: 10px; color: #aaa; flex: none; }
.cortana { width: 13px; height: 13px; border: 2px solid #eee; border-radius: 50%; margin-right: 6px; flex: none; }
.mic { width: 8px; height: 12px; margin-left: auto; margin-right: 10px; }
.tasks { display: flex; align-items: stretch; height: 26px; }
.task { width: 32.750px; height: 26px; display: flex; align-items: center; justify-content: center; position: relative; flex: none; }
.task svg { width: 15px; height: 15px; }
.task.run::after { content: ""; position: absolute; left: 3px; right: 3px; bottom: 0; height: 2px; background: #76b9ed; }
.task.active { background: #3a3a3a; }
.task.active svg { width: 17px; height: 17px; }
.tray { margin-left: auto; display: flex; align-items: center; height: 26px; padding-right: 9px; }
.t1 { width: 8px; height: 5px; margin-right: 2px; }
.t2 { width: 13px; height: 13px; margin: 0 2px; }
.lang { font-size: 8px; margin: 0 8px 0 3.500px; }
.clock { display: flex; flex-direction: column; align-items: center; gap: 4px; font-size: 7.600px; }
.notif { position: relative; margin-left: 13px; width: 18px; height: 18px; }
.notif svg { width: 13px; height: 13px; position: absolute; left: 0; top: 1px; }
.notif b { position: absolute; left: 5px; top: 7px; width: 11px; height: 11px; border-radius: 50%; background: #111; border: 1px solid #999; font-size: 7px; text-align: center; line-height: 9px; font-weight: 400; color: #eee; }

/* dialog */
.dialog { position: absolute; left: 501px; top: 203px; width: 278px; height: 283px; background: #f0f0f0; border: 1px solid #7db2e0; box-shadow: 0 2px 10px rgba(0,0,0,.3); display: flex; flex-direction: column; }
.dlg-title { height: 20px; flex: none; background: #fff; display: flex; align-items: center; padding: 0 0 1px 4px; gap: 3px; font-size: 8.600px; color: #444; }
.dlg-icon { width: 12px; height: 12px; }
.dlg-x { width: 8px; height: 8px; margin-left: auto; margin-right: 5px; }
.dlg-top { display: flex; padding-top: 9px; flex: none; height: 192px; }
.vslider { width: 37px; position: relative; flex: none; }
.vtrack { position: absolute; left: 13px; top: 3px; height: 174px; width: 2px; background: #e2e2e2; }
.vthumb { position: absolute; left: 8px; top: 42px; width: 13px; height: 8px; background: #0a78d4; clip-path: polygon(0 0, 70% 0, 100% 50%, 70% 100%, 0 100%); }
.preview { width: 233px; height: 183px; background: #fff; border: 2px solid; border-color: #888 #ccc #ccc #888; outline: 1px solid #aaa; outline-offset: -1px; display: flex; flex-direction: column; }
.pv-tools { height: 16px; flex: none; display: flex; align-items: center; padding-left: 2.500px; gap: 2.600px; background: linear-gradient(#fafafa, #c4c4c4); }
.pi { width: 11.800px; height: 11.800px; flex: none; }
.pv-gap { width: 4px; flex: none; }
.pv-scene { flex: 1; width: 100%; min-height: 0; display: block; }
.hslider { height: 21px; position: relative; flex: none; margin: 10px 0 0 41px; width: 226px; }
.ticks { display: flex; justify-content: space-between; padding: 0 2px; }
.ticks i { width: 1px; height: 3px; background: #ccc; }
.htrack { position: absolute; left: 0; right: 0; top: 10px; height: 2px; background: #e0e0e0; }
.hthumb { position: absolute; left: 147px; top: 5px; width: 7px; height: 11px; background: #0a78d4; clip-path: polygon(50% 0, 100% 30%, 100% 100%, 0 100%, 0 30%); }
.dlg-bottom { flex: 1; display: flex; justify-content: space-between; padding: 6px 6px 0 7px; }
.checks { display: flex; flex-direction: column; gap: 5px; }
.chk { display: flex; align-items: center; height: 10px; color: #444; font-size: 7.200px; white-space: nowrap; }
.box { width: 10px; height: 10px; border: 1px solid #777; background: #fff; display: block; flex: none; }
.box.checked { background: #ddd; }
.box svg { width: 8px; height: 8px; display: block; }
.btns { display: flex; gap: 4px; padding-top: 11px; }
.btn { width: 50px; height: 14px; border: 1px solid #adadad; background: #e1e1e1; display: flex; align-items: center; justify-content: center; color: #444; font-size: 7.400px; }
.btn.def { width: 48px; border: 2px solid #2b78b8; }
.grip { position: absolute; right: 1px; bottom: 1px; width: 6px; height: 6px; background: radial-gradient(#aaa 40%, transparent 45%) 0 0 / 2px 2px; }
```
